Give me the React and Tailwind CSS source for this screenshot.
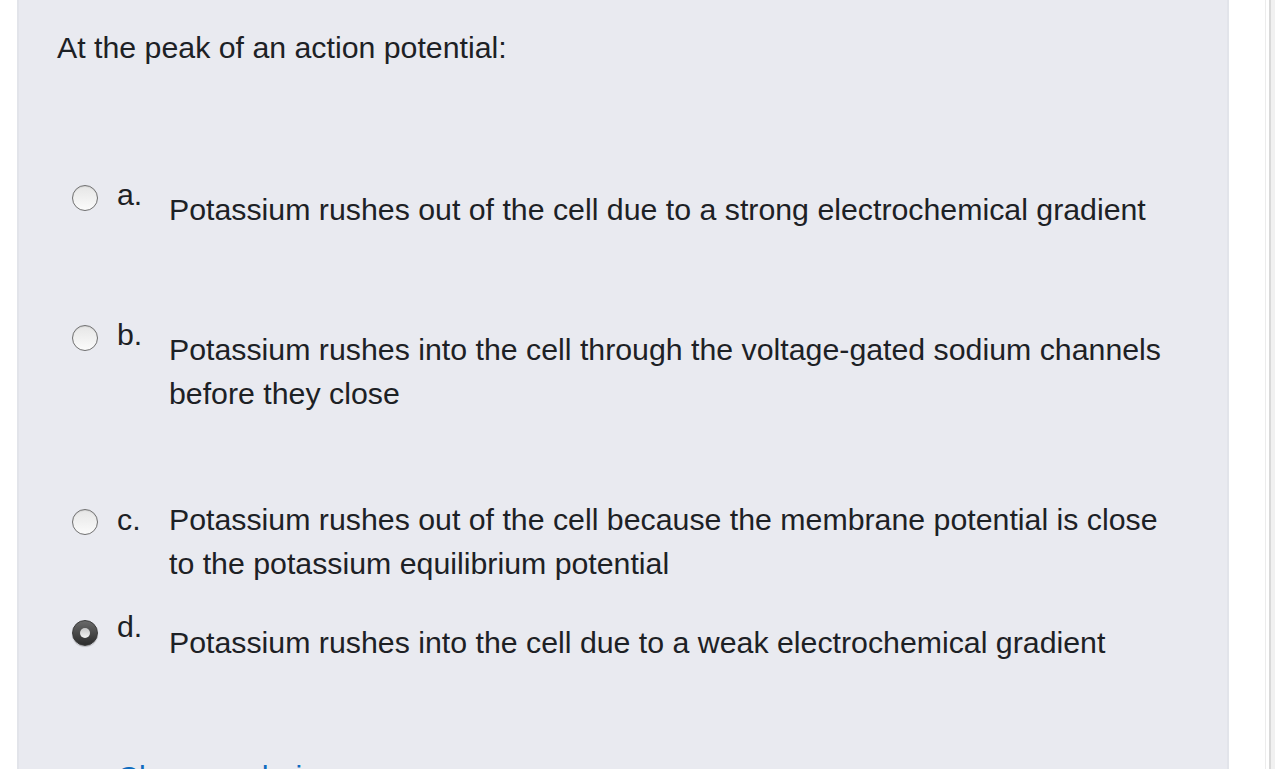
import React from "react";

function Radio({ checked }) {
  if (checked) {
    return (
      <div className="w-[26px] h-[26px] rounded-full border border-[#3a3a3a] bg-linear-to-b from-[#6a6a6a] to-[#2c2c2c] flex items-center justify-center shadow-[0_1px_1px_rgba(0,0,0,0.2)]">
        <div className="w-[10px] h-[10px] rounded-full bg-linear-to-b from-[#c8c8c8] to-[#f4f4f4]" />
      </div>
    );
  }
  return (
    <div className="w-[26px] h-[26px] rounded-full border border-[#707070] bg-linear-to-b from-[#e6e6e6] to-[#fbfbfb] shadow-[inset_0_1px_1px_rgba(0,0,0,0.08)]" />
  );
}

function Option({ letter, text, checked, textOffset, radioOffset, mt }) {
  return (
    <div className={`flex items-start ${mt}`}>
      <div className={`ml-[15px] w-[45px] shrink-0 ${radioOffset}`}>
        <Radio checked={checked} />
      </div>
      <div className="w-[52px] shrink-0">{letter}</div>
      <div className={`w-[1005px] ${textOffset}`}>{text}</div>
    </div>
  );
}

export default function App() {
  return (
    <div className="h-[769px] overflow-hidden flex bg-white font-['Liberation_Sans','Arial',sans-serif] text-[#1d2125] text-[30.3px] leading-[44px]">
      <div className="w-[17px] shrink-0 bg-white" />
      <div className="w-[1212px] shrink-0 bg-[#e9eaf0] border-l-2 border-r-2 border-[#e2e4ea] pl-[38px] pt-[26px]">
        <div>At the peak of an action potential:</div>

        <Option
          mt="mt-[103px]"
          letter="a."
          radioOffset="mt-[12px]"
          textOffset="mt-[15px]"
          text="Potassium rushes out of the cell due to a strong electrochemical gradient"
        />
        <Option
          mt="mt-[81px]"
          letter="b."
          radioOffset="mt-[12px]"
          textOffset="mt-[15px]"
          text="Potassium rushes into the cell through the voltage-gated sodium channels before they close"
        />
        <Option
          mt="mt-[82px]"
          letter="c."
          radioOffset="mt-[11px]"
          textOffset=""
          text="Potassium rushes out of the cell because the membrane potential is close to the potassium equilibrium potential"
        />
        <Option
          mt="mt-[19px]"
          letter="d."
          checked
          radioOffset="mt-[15px]"
          textOffset="mt-[16px]"
          text="Potassium rushes into the cell due to a weak electrochemical gradient"
        />
        <div className="mt-[90px] ml-[60px] text-[#0f6cbf]">Clear my choice</div>
      </div>
      <div className="w-[36px] shrink-0 bg-white" />
      <div className="w-[1px] shrink-0 bg-[#ececec]" />
      <div className="w-[3px] shrink-0 bg-white" />
      <div className="w-[2px] shrink-0 bg-[#d9d9d9]" />
      <div className="flex-1 bg-[#f1f1f1]" />
    </div>
  );
}
